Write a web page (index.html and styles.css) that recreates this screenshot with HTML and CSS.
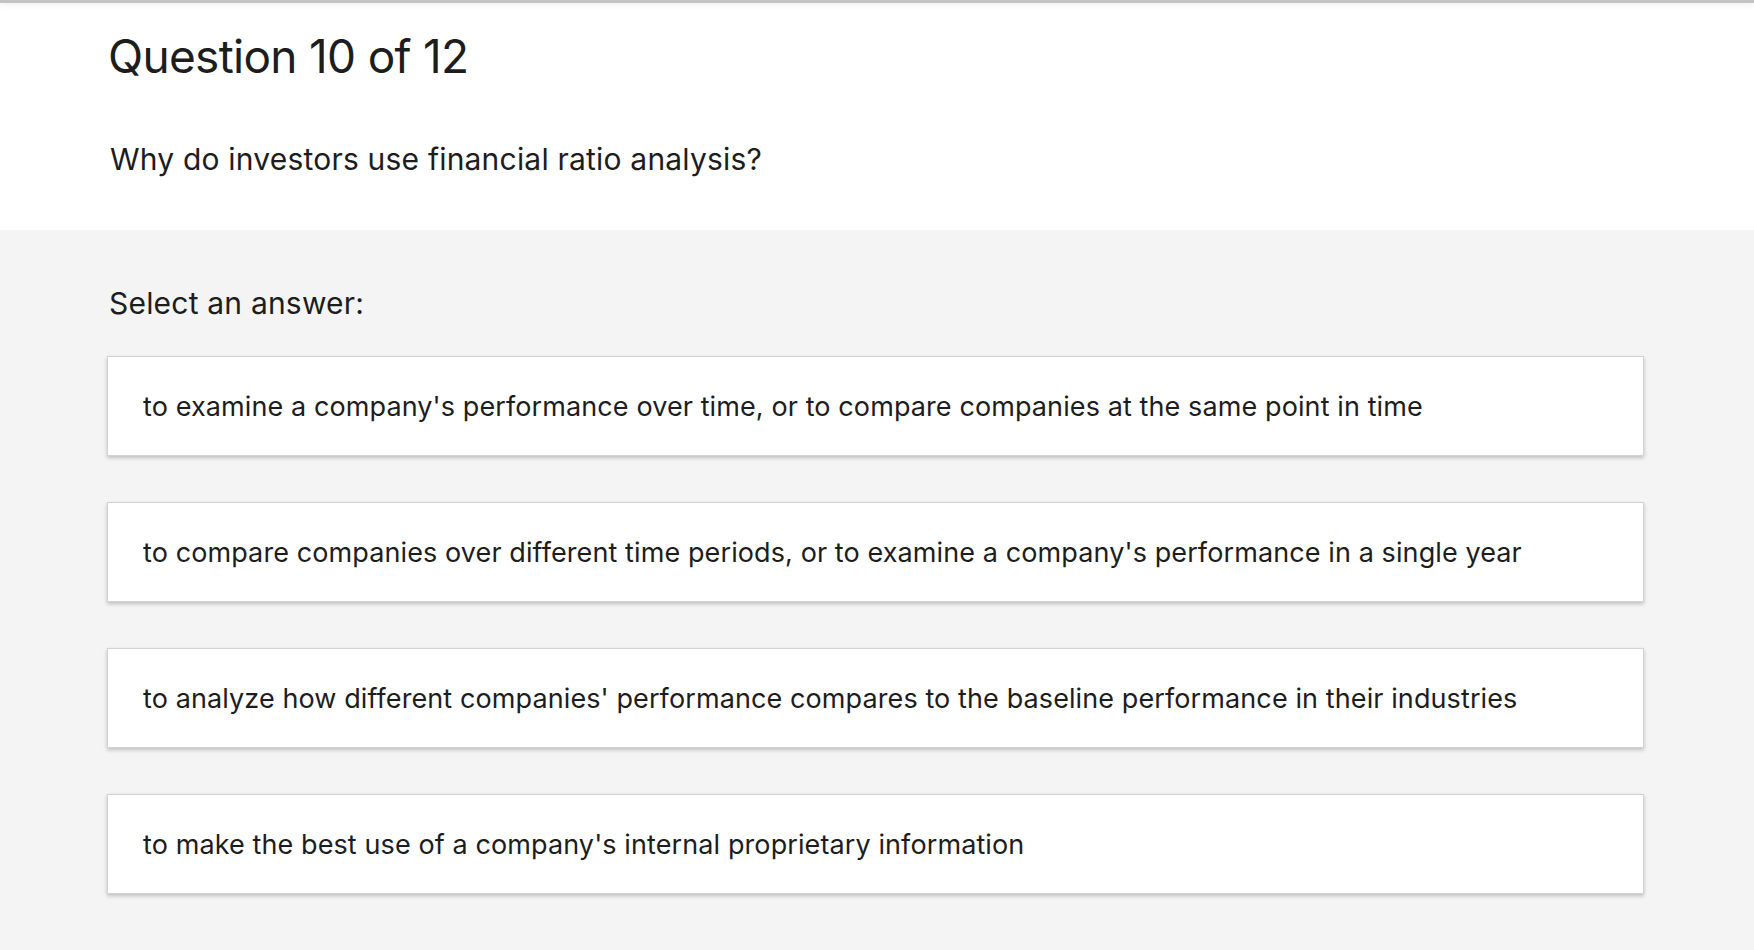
FILE: index.html
```html
<!DOCTYPE html>
<html lang="en">
<head>
<meta charset="utf-8">
<title>Question 10 of 12</title>
<link rel="stylesheet" href="styles.css">
</head>
<body>
<div class="topbar"></div>
<header class="question-head">
  <div class="wrap">
    <h1 class="q-count">Question 10 of 12</h1>
    <p class="q-text">Why do investors use financial ratio analysis?</p>
  </div>
</header>
<main class="answers">
  <div class="wrap">
    <h2 class="select-label">Select an answer:</h2>
    <ul class="options">
      <li class="option">to examine a company's performance over time, or to compare companies at the same point in time</li>
      <li class="option">to compare companies over different time periods, or to examine a company's performance in a single year</li>
      <li class="option">to analyze how different companies' performance compares to the baseline performance in their industries</li>
      <li class="option">to make the best use of a company's internal proprietary information</li>
    </ul>
  </div>
</main>
</body>
</html>
```

FILE: styles.css
```css
html, body {
  margin: 0;
  padding: 0;
}
body {
  width: 1754px;
  height: 950px;
  overflow: hidden;
  background: #f4f4f4;
  font-family: "Inter", "Noto Sans", sans-serif;
  color: #1d1d1d;
}
.topbar {
  height: 3px;
  background: #c3c3c3;
  box-shadow: 0 1px 6px rgba(0,0,0,0.12);
  position: relative;
}
.question-head {
  background: #fff;
  height: 227px;
}
.wrap {
  padding: 0 110px 0 107px;
}
.q-count {
  margin: 0;
  padding: 25px 0 0 1px;
  font-size: 46px;
  font-weight: 400;
  line-height: 56px;
  letter-spacing: -0.7px;
}
.q-text {
  margin: 0;
  padding: 57px 0 0 3px;
  font-size: 30px;
  line-height: 36px;
  font-weight: 400;
  letter-spacing: 0.2px;
}
.answers {
  padding-top: 55px;
}
.select-label {
  margin: 0;
  padding-left: 2px;
  font-size: 30px;
  line-height: 36px;
  font-weight: 400;
  letter-spacing: 0.2px;
}
.options {
  list-style: none;
  margin: 35px 0 0;
  padding: 0;
  display: flex;
  flex-direction: column;
  gap: 46px;
}
.option {
  box-sizing: border-box;
  height: 100px;
  background: #fff;
  border: 1px solid #d2d2d2;
  box-shadow: 0 2px 4px rgba(0,0,0,0.22);
  display: flex;
  align-items: center;
  padding: 0 32px 0 35px;
  font-size: 27px;
  letter-spacing: 0.1px;
}
```
